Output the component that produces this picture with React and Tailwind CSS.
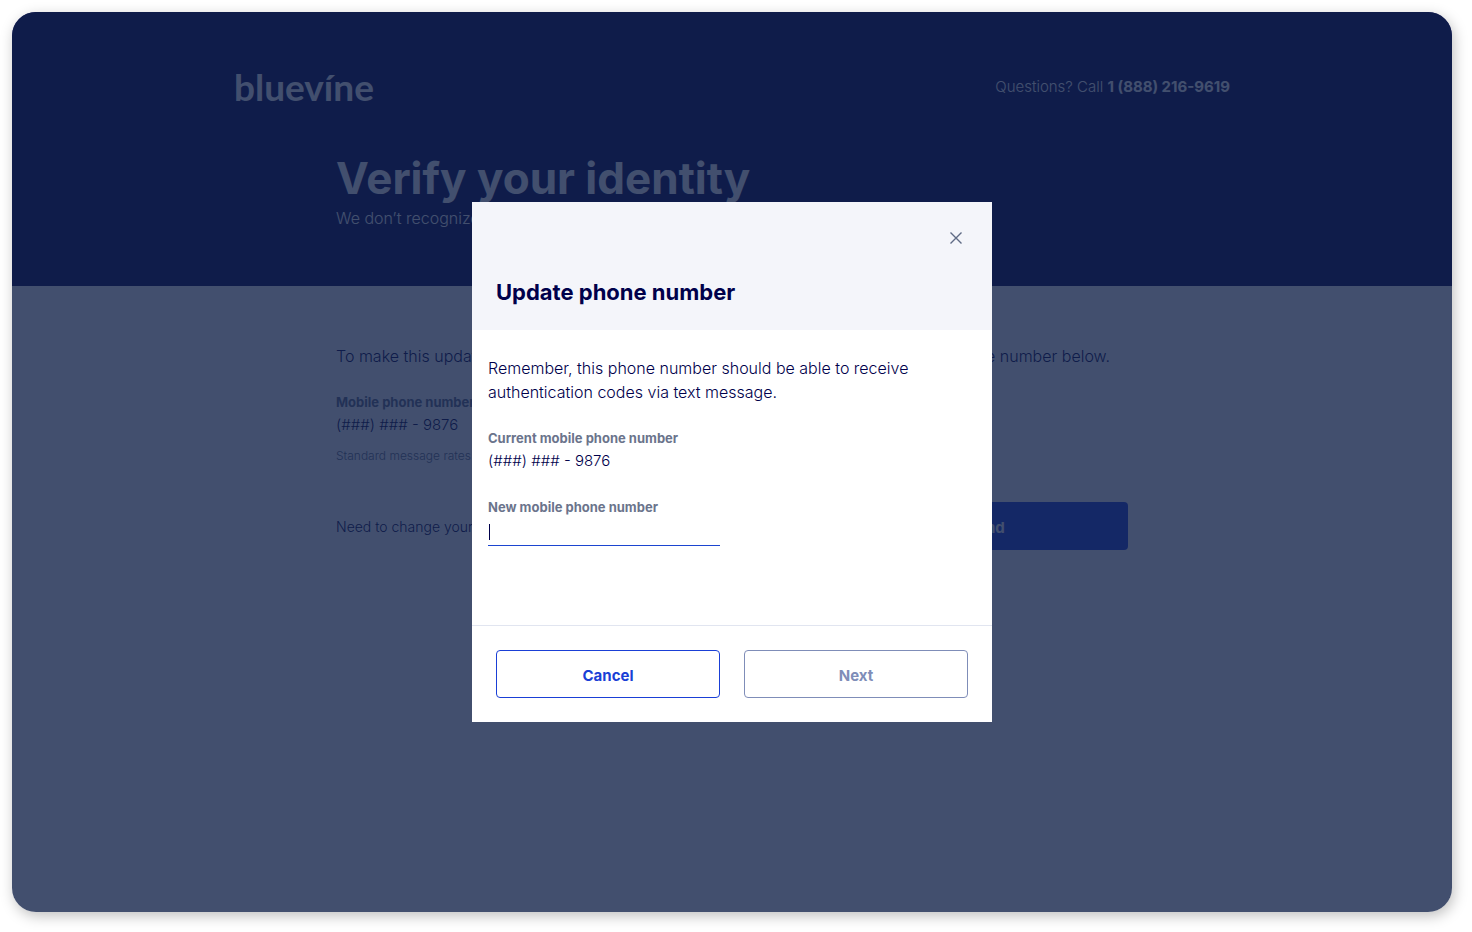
import { useState } from "react"

const BODY = "text-base leading-6 font-light"
const LABEL = "block text-[13px] leading-[21px] font-bold"
const NUMBER = "text-[15px] leading-6 font-light"
const OUTLINE_BUTTON = "h-12 flex-1 rounded border bg-white pt-1 text-[15px] font-bold"

const Header = () => (
  <header className="h-[274px] bg-[#00004b] px-6 pt-[54px] text-white">
    <div className="mx-auto flex max-w-[996px] items-center justify-between">
      <a href="#home" className="font-[Lato,sans-serif] text-[37px] leading-[42px] font-bold">bluevíne</a>
      <p className={NUMBER}>
        Questions? Call <a href="tel:18882169619" className="font-bold">1 (888) 216-9619</a>
      </p>
    </div>
    <div className="mx-auto mt-[46px] max-w-[792px]">
      <h1 className="text-[44px] leading-[48px] font-bold">Verify your identity</h1>
      <p className={`${BODY} mt-1`}>We don’t recognize the device you’re using.</p>
    </div>
  </header>
)

const VerifyForm = () => (
  <main className="mx-auto max-w-[792px] pt-[58px] text-[#00004b]">
    <p className={`${BODY} whitespace-nowrap`}>
      To make this update, we’ll first send an authentication code to your current mobile phone number below.
    </p>
    <div className="mt-6">
      <p className={`${LABEL} text-[#5f6b85]`}>Mobile phone number</p>
      <p className={NUMBER}>(###) ### - 9876</p>
      <p className="mt-2 text-xs leading-[21px] font-light text-[#5f6b85]">Standard message rates apply.</p>
    </div>
    <div className="mt-9 flex items-center justify-between">
      <p className="pt-0.5 text-sm font-light">Need to change your phone number?</p>
      <button type="button" className="h-12 w-[284px] rounded bg-[#1a3fd6] pt-1 text-[15px] font-bold text-white">
        Send
      </button>
    </div>
  </main>
)

const UpdatePhoneModal = () => {
  const [phone, setPhone] = useState("")

  return (
    <div role="dialog" aria-modal="true" aria-labelledby="modal-title" className="flex min-h-[520px] w-[520px] flex-col bg-white text-[#00004b]">
      <div className="flex h-32 flex-col justify-between bg-[#f4f5fa] p-6">
        <button type="button" aria-label="Close" className="flex size-6 items-center justify-center self-end text-[#5f6b85]">
          <svg viewBox="0 0 12 12" className="size-3" fill="none" stroke="currentColor" strokeWidth="1.4">
            <path d="M.5.5l11 11M11.5.5l-11 11" />
          </svg>
        </button>
        <h2 id="modal-title" className="text-[22px] leading-7 font-bold">Update phone number</h2>
      </div>

      <div className="flex-1 px-4 pt-[26px]">
        <p className={BODY}>
          Remember, this phone number should be able to receive authentication codes via text message.
        </p>
        <div className="mt-6">
          <p className={`${LABEL} text-[#6b748c]`}>Current mobile phone number</p>
          <p className={NUMBER}>(###) ### - 9876</p>
        </div>
        <div className="mt-6">
          <label htmlFor="new-phone" className={`${LABEL} text-[#6b748c]`}>New mobile phone number</label>
          <div className="flex h-7 w-[232px] items-center border-b border-[#1c45d0]">
            {!phone && <span className="ml-px h-4 w-px bg-[#00004b]" />}
            <input
              id="new-phone"
              type="tel"
              value={phone}
              onChange={e => setPhone(e.target.value)}
              className="min-w-0 flex-1 text-[15px] font-light outline-none"
            />
          </div>
        </div>
      </div>

      <div className="flex gap-6 border-t border-[#e1e5f0] p-6">
        <button type="button" className={`${OUTLINE_BUTTON} border-[#1a3fd6] text-[#1a3fd6]`}>Cancel</button>
        <button type="button" disabled={!phone} className={`${OUTLINE_BUTTON} border-[#7f8db8] text-[#7f8db8]`}>Next</button>
      </div>
    </div>
  )
}

const App = () => (
  <div className="flow-root bg-white font-[Inter,sans-serif]">
    <div className="relative mt-3 mr-5 mb-5 ml-3 min-h-[calc(100vh-32px)] overflow-hidden rounded-3xl bg-white shadow-[2px_4px_14px_rgba(0,0,0,0.25)]">
      <Header />
      <VerifyForm />

      {/* Backdrop */}
      <div className="absolute inset-0 flex items-center justify-center bg-[#13234a]/80">
        <UpdatePhoneModal />
      </div>
    </div>
  </div>
)

export default App
